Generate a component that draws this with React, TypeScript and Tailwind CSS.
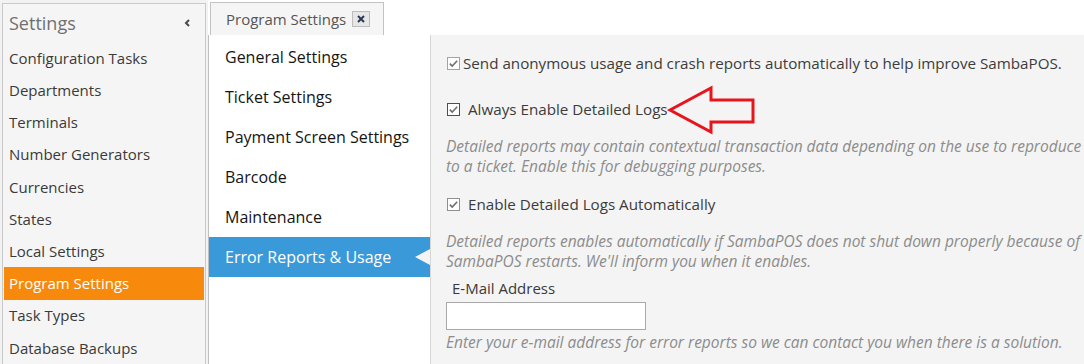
import React from "react";

const sideItems = [
  "Configuration Tasks",
  "Departments",
  "Terminals",
  "Number Generators",
  "Currencies",
  "States",
  "Local Settings",
  "Program Settings",
  "Task Types",
  "Database Backups",
];

const listItems = [
  "General Settings",
  "Ticket Settings",
  "Payment Screen Settings",
  "Barcode",
  "Maintenance",
  "Error Reports & Usage",
];

function Check({ border }: { border: string }) {
  return (
    <svg width="13" height="13" viewBox="0 0 13 13" className="shrink-0">
      <rect x="0.5" y="0.5" width="12" height="12" fill="#ffffff" stroke={border} />
      <polyline points="2.8,6.6 5.2,9 10.2,3.8" fill="none" stroke="#6f6f6f" strokeWidth="1.6" />
    </svg>
  );
}

export default function App() {
  return (
    <div
      className="relative flex h-[364px] w-[1084px] overflow-hidden bg-white text-[#333]"
      style={{ fontFamily: '"Open Sans", "Noto Sans", sans-serif' }}
    >
      {/* Sidebar */}
      <div className="flex w-[208px] shrink-0 bg-[#f2f2f2] pl-[2px] pt-[3px]">
        <div className="flex w-[204px] flex-col border-l border-r border-t border-[#c9c9c9] bg-[#f5f5f5]">
          <div className="flex h-[38px] items-center justify-between pl-[6px] pr-[14px]">
            <span className="text-[18px] text-[#707070]">Settings</span>
            <svg width="7" height="8" viewBox="0 0 7 8">
              <polyline points="5,1 2,4 5,7" fill="none" stroke="#4a4a4a" strokeWidth="2" />
            </svg>
          </div>
          <div className="flex flex-col px-[1px]">
            {sideItems.map((s) => (
              <div
                key={s}
                className={
                  "flex h-[32.2px] items-center pl-[5px] text-[15px] " +
                  (s === "Program Settings" ? "bg-[#f7890c] text-white" : "text-[#3a3a3a]")
                }
              >
                {s}
              </div>
            ))}
          </div>
        </div>
      </div>

      {/* Main */}
      <div className="flex flex-1 flex-col">
        <div className="flex h-[35px] shrink-0 items-end bg-white pl-[2px]">
          <div className="flex h-[33px] w-[174px] items-center border-l border-r border-t border-[#c2c2c2] bg-[#f5f5f5] pl-[15px]">
            <span className="text-[15px] text-[#555]">Program Settings</span>
            <div className="ml-[6px] flex h-[16px] w-[18px] items-center justify-center border border-[#bdbdbd] bg-[#e6e6e6]">
              <svg width="8" height="8" viewBox="0 0 8 8">
                <path d="M1 1 L7 7 M7 1 L1 7" stroke="#2a3a55" strokeWidth="2" />
              </svg>
            </div>
          </div>
        </div>
        <div className="flex flex-1">
          {/* list */}
          <div className="flex w-[222px] shrink-0 flex-col border-l border-[#bfbfbf] bg-white pt-[2px]">
            {listItems.map((s) => (
              <div
                key={s}
                className={
                  "relative flex h-[40px] items-center pl-[16px] text-[16px] " +
                  (s === "Error Reports & Usage" ? "bg-[#3a99d8] text-white" : "text-[#151515]")
                }
              >
                {s}
                {s === "Error Reports & Usage" && (
                  <div className="absolute right-0 top-[12px] h-0 w-0 border-b-[8px] border-r-[15px] border-t-[8px] border-b-transparent border-r-[#f4f4f4] border-t-transparent" />
                )}
              </div>
            ))}
          </div>
          {/* content */}
          <div className="flex-1 overflow-hidden border-l border-[#d6d6d6] bg-[#f4f4f4] pl-[15px] pt-[17px]">
            <div className="flex h-[22px] items-center whitespace-nowrap pl-[1px] text-[15.2px] text-[#3c3c3c]">
              <Check border="#a3a3a3" />
              <span className="ml-[3px]">
                Send anonymous usage and crash reports automatically to help improve SambaPOS.
              </span>
            </div>
            <div className="mt-[24px] flex h-[22px] items-center whitespace-nowrap pl-[1px] text-[15.2px] text-[#3c3c3c]">
              <Check border="#2a5494" />
              <span className="ml-[8px]">Always Enable Detailed Logs</span>
            </div>
            <div className="mt-[16px] whitespace-nowrap text-[15.5px] italic leading-[20px] text-[#8c8c8c]">
              <div>Detailed reports may contain contextual transaction data depending on the use to reproduce</div>
              <div>to a ticket. Enable this for debugging purposes.</div>
            </div>
            <div className="mt-[17px] flex h-[22px] items-center whitespace-nowrap pl-[1px] text-[15.2px] text-[#3c3c3c]">
              <Check border="#8f8f8f" />
              <span className="ml-[8px]">Enable Detailed Logs Automatically</span>
            </div>
            <div className="mt-[16px] whitespace-nowrap text-[15.5px] italic leading-[20px] text-[#8c8c8c]">
              <div>Detailed reports enables automatically if SambaPOS does not shut down properly because of</div>
              <div>SambaPOS restarts. We'll inform you when it enables.</div>
            </div>
            <div className="mt-[7px] pl-[6px] text-[15px] leading-[20px] text-[#3a3a3a]">E-Mail Address</div>
            <div className="mt-[4px] h-[28px] w-[200px] border border-[#a8a8a8] bg-white" />
            <div className="mt-[2px] whitespace-nowrap text-[15.5px] italic leading-[20px] text-[#8c8c8c]">
              Enter your e-mail address for error reports so we can contact you when there is a solution.
            </div>
          </div>
        </div>
      </div>

      {/* annotation arrow */}
      <svg
        className="absolute left-[666px] top-[84px]"
        width="92"
        height="52"
        viewBox="0 0 92 52"
      >
        <polygon
          points="4,26 45,4 45,16 87,16 87,38 45,38 45,48"
          fill="none"
          stroke="#e8141b"
          strokeWidth="3"
          strokeLinejoin="miter"
        />
      </svg>
    </div>
  );
}
